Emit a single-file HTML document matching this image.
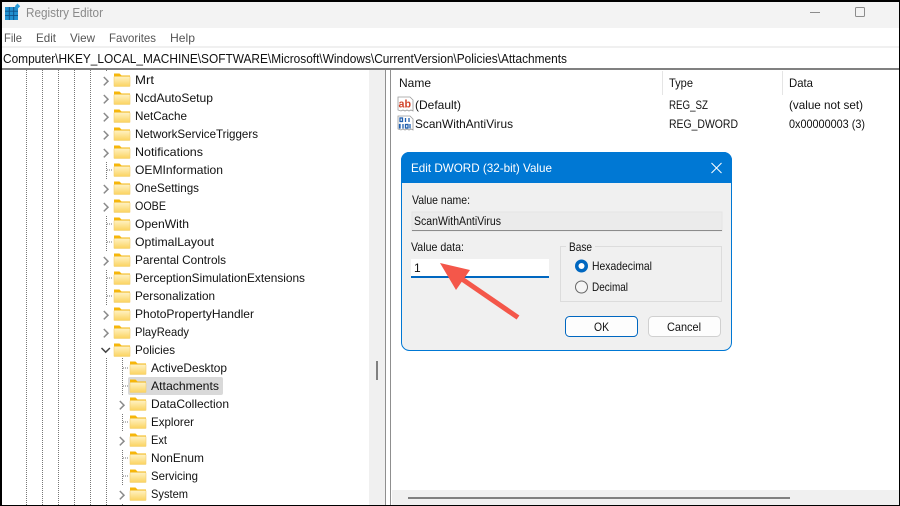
<!DOCTYPE html>
<html><head><meta charset="utf-8"><style>
html,body{margin:0;padding:0;background:#fff}
svg{display:block}
text{font-family:"Liberation Sans",sans-serif;font-size:12px;fill:#111}
</style></head><body>
<svg width="900" height="506" viewBox="0 0 900 506" xmlns="http://www.w3.org/2000/svg">
<defs>
<linearGradient id="fg" x1="0" y1="0" x2="0" y2="1"><stop offset="0" stop-color="#fff2c4"/><stop offset="1" stop-color="#fbd35f"/></linearGradient>
<g id="f"><path d="M0.500 -6.500h5.500l2 2h8.500v3H0.500z" fill="#f6b60a"/><rect x="0.500" y="-3.500" width="16" height="10" rx="0.500" fill="url(#fg)" stroke="#f2cf70" stroke-width="0.600"/></g>
<g id="c"><rect x="-4" y="-10" width="8" height="18" fill="#fff"/><path d="M-2 -4L2.200 0.200L-2 4.400" fill="none" stroke="#8a8a8a" stroke-width="1.500"/></g>
</defs>
<rect width="900" height="506" fill="#fff"/>
<rect x="0" y="2" width="900" height="26" fill="#f3f3f3"/>
<rect x="0" y="46" width="900" height="2" fill="#f0f0f0"/>
<rect x="0" y="68" width="900" height="2" fill="#808080"/>

<g>
<rect x="5" y="7" width="13" height="13" fill="#2090d0"/>
<path d="M5 11.200h13M5 15.600h13M9.300 7v13M13.700 7v13" stroke="#0d4f86" stroke-width="0.900"/>
<path d="M17.500 3.500l2.700 2.700-2.700 2.700-2.700-2.700z" fill="#2a9bd8"/>
<text x="26" y="17" textLength="77" lengthAdjust="spacingAndGlyphs" style="fill:#8a8a8a;font-size:12.500px">Registry Editor</text>
</g>
<path d="M810 12.500h10" stroke="#8c8c8c" stroke-width="1"/>
<rect x="855.500" y="7.500" width="9" height="9" rx="1" fill="none" stroke="#8c8c8c"/>

<text x="4" y="42" textLength="18" lengthAdjust="spacingAndGlyphs" style="fill:#555">File</text>
<text x="36" y="42" textLength="20" lengthAdjust="spacingAndGlyphs" style="fill:#555">Edit</text>
<text x="70" y="42" textLength="25" lengthAdjust="spacingAndGlyphs" style="fill:#555">View</text>
<text x="109" y="42" textLength="47" lengthAdjust="spacingAndGlyphs" style="fill:#555">Favorites</text>
<text x="170" y="42" textLength="25" lengthAdjust="spacingAndGlyphs" style="fill:#555">Help</text>
<text x="3" y="63" textLength="564" lengthAdjust="spacingAndGlyphs" style="font-size:12.500px">Computer\HKEY_LOCAL_MACHINE\SOFTWARE\Microsoft\Windows\CurrentVersion\Policies\Attachments</text>

<g stroke="#777" stroke-width="1" stroke-dasharray="1 1" fill="none">
<path d="M26.500 70V505M42.500 70V505M58.500 70V505M74.500 70V505M90.500 70V505"/>
<path d="M106.500 70V505M122.500 358V505"/>
<path d="M107 170h6M107 224h6M107 242h6M107 278h6M107 296h6M123 368h6M123 386h5M123 422h6M123 458h6M123 476h6"/>
</g>

<use href="#c" x="105.800" y="81"/><use href="#c" x="105.800" y="99"/><use href="#c" x="105.800" y="117"/><use href="#c" x="105.800" y="135"/><use href="#c" x="105.800" y="153"/><use href="#c" x="105.800" y="189"/><use href="#c" x="105.800" y="207"/><use href="#c" x="105.800" y="261"/><use href="#c" x="105.800" y="315"/><use href="#c" x="105.800" y="333"/>
<rect x="101" y="342" width="10" height="16" fill="#fff"/>
<path d="M101.500 348l4.200 4.200 4.200-4.200" fill="none" stroke="#444" stroke-width="1.500"/>
<use href="#c" x="121.800" y="405"/><use href="#c" x="121.800" y="441"/><use href="#c" x="121.800" y="495"/>

<rect x="128" y="377" width="95" height="18" rx="2" fill="#d9d9d9"/>

<use href="#f" x="113.500" y="80"/><use href="#f" x="113.500" y="98"/><use href="#f" x="113.500" y="116"/><use href="#f" x="113.500" y="134"/><use href="#f" x="113.500" y="152"/><use href="#f" x="113.500" y="170"/><use href="#f" x="113.500" y="188"/><use href="#f" x="113.500" y="206"/><use href="#f" x="113.500" y="224"/><use href="#f" x="113.500" y="242"/><use href="#f" x="113.500" y="260"/><use href="#f" x="113.500" y="278"/><use href="#f" x="113.500" y="296"/><use href="#f" x="113.500" y="314"/><use href="#f" x="113.500" y="332"/><use href="#f" x="113.500" y="350"/>
<use href="#f" x="129.500" y="368"/><use href="#f" x="129.500" y="386"/><use href="#f" x="129.500" y="404"/><use href="#f" x="129.500" y="422"/><use href="#f" x="129.500" y="440"/><use href="#f" x="129.500" y="458"/><use href="#f" x="129.500" y="476"/><use href="#f" x="129.500" y="494"/>

<text x="135" y="84" textLength="19" lengthAdjust="spacingAndGlyphs">Mrt</text>
<text x="135" y="102" textLength="78" lengthAdjust="spacingAndGlyphs">NcdAutoSetup</text>
<text x="135" y="120" textLength="52" lengthAdjust="spacingAndGlyphs">NetCache</text>
<text x="135" y="138" textLength="123" lengthAdjust="spacingAndGlyphs">NetworkServiceTriggers</text>
<text x="135" y="156" textLength="68" lengthAdjust="spacingAndGlyphs">Notifications</text>
<text x="135" y="174" textLength="88" lengthAdjust="spacingAndGlyphs">OEMInformation</text>
<text x="135" y="192" textLength="64" lengthAdjust="spacingAndGlyphs">OneSettings</text>
<text x="135" y="210" textLength="31" lengthAdjust="spacingAndGlyphs">OOBE</text>
<text x="135" y="228" textLength="54" lengthAdjust="spacingAndGlyphs">OpenWith</text>
<text x="135" y="246" textLength="79" lengthAdjust="spacingAndGlyphs">OptimalLayout</text>
<text x="135" y="264" textLength="91" lengthAdjust="spacingAndGlyphs">Parental Controls</text>
<text x="135" y="282" textLength="170" lengthAdjust="spacingAndGlyphs">PerceptionSimulationExtensions</text>
<text x="135" y="300" textLength="80" lengthAdjust="spacingAndGlyphs">Personalization</text>
<text x="135" y="318" textLength="119" lengthAdjust="spacingAndGlyphs">PhotoPropertyHandler</text>
<text x="135" y="336" textLength="54" lengthAdjust="spacingAndGlyphs">PlayReady</text>
<text x="135" y="354" textLength="40" lengthAdjust="spacingAndGlyphs">Policies</text>
<text x="151" y="372" textLength="76" lengthAdjust="spacingAndGlyphs">ActiveDesktop</text>
<text x="151" y="390" textLength="68" lengthAdjust="spacingAndGlyphs">Attachments</text>
<text x="151" y="408" textLength="78" lengthAdjust="spacingAndGlyphs">DataCollection</text>
<text x="151" y="426" textLength="43" lengthAdjust="spacingAndGlyphs">Explorer</text>
<text x="151" y="444" textLength="16" lengthAdjust="spacingAndGlyphs">Ext</text>
<text x="151" y="462" textLength="53" lengthAdjust="spacingAndGlyphs">NonEnum</text>
<text x="151" y="480" textLength="47" lengthAdjust="spacingAndGlyphs">Servicing</text>
<text x="151" y="498" textLength="37" lengthAdjust="spacingAndGlyphs">System</text>

<rect x="369" y="70" width="16" height="435" fill="#f0f0f0"/>
<rect x="376" y="361" width="2" height="19" fill="#808080"/>
<rect x="385" y="70" width="1" height="435" fill="#8f8f8f"/>
<rect x="390" y="70" width="1" height="435" fill="#8f8f8f"/>
<rect x="392" y="490" width="507" height="15" fill="#f0f0f0"/>
<rect x="408" y="497" width="382" height="2" fill="#808080"/>

<path d="M662.500 71V95M782.500 71V95" stroke="#e5e5e5"/>
<text x="399" y="87" textLength="32" lengthAdjust="spacingAndGlyphs">Name</text>
<text x="669" y="87" textLength="24" lengthAdjust="spacingAndGlyphs">Type</text>
<text x="789" y="87" textLength="24" lengthAdjust="spacingAndGlyphs">Data</text>

<path d="M398 97h12l3 3v11l-2-1-2 1-2-1-2 1-2-1-2 1-3-1z" fill="#fff" stroke="#9a9a9a" stroke-width="0.800"/>
<text x="398.500" y="107.500" textLength="12.500" lengthAdjust="spacingAndGlyphs" style="font-size:11px;font-weight:bold;fill:#d2452c">ab</text>
<text x="415" y="109" textLength="46" lengthAdjust="spacingAndGlyphs">(Default)</text>
<path d="M398 116h12l3 3v11l-2-1-2 1-2-1-2 1-2-1-2 1-3-1z" fill="#fff" stroke="#9a9a9a" stroke-width="0.800"/>
<g fill="none" stroke="#1f5fae" stroke-width="1.300">
<rect x="400" y="118" width="2.500" height="3.500"/>
<path d="M405.500 118v4M409 118v4M403 124v4.500M410 124v4.500"/>
<rect x="405.500" y="124.500" width="2.500" height="3.500"/>
<rect x="399.500" y="124.500" width="0.500" height="3.500"/>
</g>
<text x="415" y="128" textLength="98" lengthAdjust="spacingAndGlyphs">ScanWithAntiVirus</text>
<text x="669" y="109" textLength="39" lengthAdjust="spacingAndGlyphs">REG_SZ</text>
<text x="669" y="128" textLength="69" lengthAdjust="spacingAndGlyphs">REG_DWORD</text>
<text x="789" y="109" textLength="74" lengthAdjust="spacingAndGlyphs">(value not set)</text>
<text x="789" y="128" textLength="76" lengthAdjust="spacingAndGlyphs">0x00000003 (3)</text>

<rect x="401.500" y="152.500" width="330" height="198" rx="8" fill="#f0f0f0" stroke="#0078d4"/>
<path d="M401 183V160a8 8 0 0 1 8-8h315a8 8 0 0 1 8 8v23z" fill="#0078d4"/>
<text x="411" y="172" textLength="141" lengthAdjust="spacingAndGlyphs" style="fill:#fff">Edit DWORD (32-bit) Value</text>
<path d="M711.500 163l10 10M721.500 163l-10 10" stroke="#fff" stroke-width="1"/>

<text x="412" y="204" textLength="58" lengthAdjust="spacingAndGlyphs">Value name:</text>
<rect x="412" y="212" width="310" height="19" fill="#ebebeb" stroke="#e4e4e4"/>
<path d="M412 230.500h310" stroke="#8c8c8c"/>
<text x="414" y="225" textLength="87" lengthAdjust="spacingAndGlyphs" style="font-size:11.500px">ScanWithAntiVirus</text>
<text x="411" y="251" textLength="53" lengthAdjust="spacingAndGlyphs">Value data:</text>
<rect x="411" y="259" width="138" height="17" fill="#fff"/>
<rect x="411" y="276" width="138" height="2" fill="#0067c0"/>
<text x="414" y="272">1</text>

<rect x="560.500" y="246.500" width="161" height="55" fill="none" stroke="#dcdcdc"/>
<rect x="566" y="240" width="29" height="12" fill="#f0f0f0"/>
<text x="569" y="251" textLength="23" lengthAdjust="spacingAndGlyphs">Base</text>
<circle cx="581.500" cy="266" r="6.500" fill="#0067c0"/><circle cx="581.500" cy="266" r="3" fill="#fff"/>
<circle cx="581.500" cy="287" r="6" fill="#f5f5f5" stroke="#666"/>
<text x="592" y="270" textLength="60" lengthAdjust="spacingAndGlyphs">Hexadecimal</text>
<text x="592" y="291" textLength="36" lengthAdjust="spacingAndGlyphs">Decimal</text>

<rect x="565.500" y="316.500" width="72" height="20" rx="4" fill="#fdfdfd" stroke="#0067c0"/>
<text x="594" y="331" textLength="15" lengthAdjust="spacingAndGlyphs">OK</text>
<rect x="648.500" y="316.500" width="72" height="20" rx="4" fill="#fdfdfd" stroke="#d0d0d0"/>
<text x="667" y="331" textLength="34" lengthAdjust="spacingAndGlyphs">Cancel</text>

<path d="M518 317.500L459 277" stroke="#f4574a" stroke-width="5" fill="none"/>
<path d="M440 263L470 270L456 290z" fill="#f4574a"/>

<rect x="0" y="0" width="900" height="2" fill="#000"/>
<rect x="0" y="505" width="900" height="1" fill="#000"/>
<rect x="0" y="0" width="2" height="506" fill="#000"/>
<rect x="899" y="0" width="1" height="506" fill="#000"/>
</svg>
</body></html>
